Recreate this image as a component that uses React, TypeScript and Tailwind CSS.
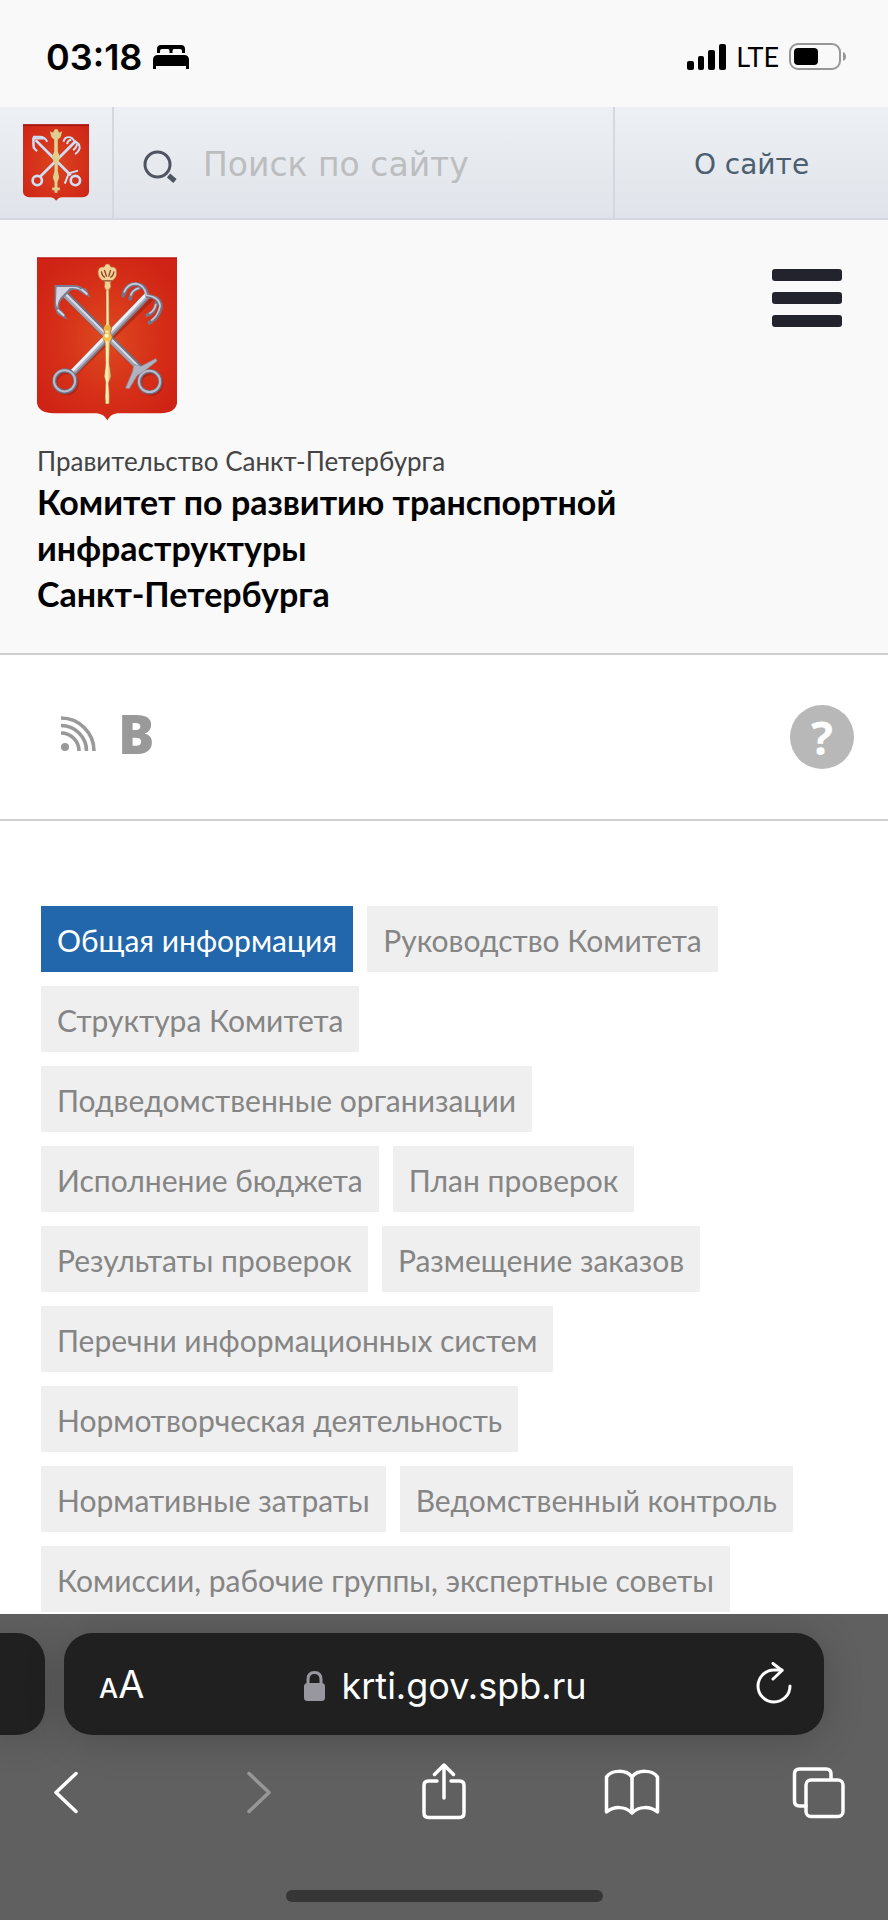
import type { ReactNode } from 'react';

const sections = [
  'Общая информация',
  'Руководство Комитета',
  'Структура Комитета',
  'Подведомственные организации',
  'Исполнение бюджета',
  'План проверок',
  'Результаты проверок',
  'Размещение заказов',
  'Перечни информационных систем',
  'Нормотворческая деятельность',
  'Нормативные затраты',
  'Ведомственный контроль',
  'Комиссии, рабочие группы, экспертные советы',
];

// Small coat of arms used in the portal bar
function SmallEmblem() {
  return (
    <svg viewBox="68 372 199 231" className="w-[66px] h-[77px]" aria-hidden="true">
      <defs>
        <radialGradient id="small-red" cx="50%" cy="50%" r="65%">
          <stop offset="0" stopColor="#dc4420" />
          <stop offset="1" stopColor="#cf2617" />
        </radialGradient>
      </defs>
      <path d="M68 373H267V575Q267 591 247 592H184Q174 593 168 603Q162 593 152 592H88Q68 591 68 575Z" fill="url(#small-red)" />
      <path d="M68 375H267" stroke="#a5130d" strokeWidth="5" />
      <g fill="none" stroke="#cfe0f5" strokeWidth="8">
        <path d="M106 420L212 526" />
        <path d="M228 422L121 529" />
        <circle cx="111" cy="542" r="14" />
        <circle cx="226" cy="542" r="14" />
      </g>
      <g fill="none" stroke="#cfe0f5" strokeWidth="6">
        <path d="M100 446V415H133" />
        <path d="M98 410H116Q134 409 141 425" />
        <path d="M99 412V430Q99 446 111 453" />
        <path d="M190 425Q193 411 206 411Q218 411 223 425Q240 429 239 444Q236 456 225 462" />
        <path d="M201 432Q203 420 214 418" />
        <path d="M231 432Q229 445 219 450" />
        <path d="M194 551L206 520L234 512" />
      </g>
      <path d="M149 393L158 398L164 387H172L177 398L186 393L181 411L173 418V455L180 471L173 491V514L177 532L172 547V563H179V571H172V579H163V571H156V563H163V547L158 532L163 514V491L155 471L162 455V418L154 411Z" fill="#dfcf8e" />
    </svg>
  );
}

// Full size coat of arms with crossed anchors and sceptre
function Emblem() {
  return (
    <svg viewBox="110 112 422 492" className="block w-[140px] h-[164px]" aria-hidden="true">
      <defs>
        <radialGradient id="field" cx="50%" cy="50%" r="60%">
          <stop offset="0" stopColor="#dd4a20" />
          <stop offset="0.6" stopColor="#d62f18" />
          <stop offset="1" stopColor="#cf2315" />
        </radialGradient>
        <linearGradient id="gold" x1="0" x2="1">
          <stop offset="0" stopColor="#e9a94a" />
          <stop offset="0.45" stopColor="#fff0b8" />
          <stop offset="1" stopColor="#c9852f" />
        </linearGradient>
      </defs>
      <path d="M110 112H532V552Q526 582 482 582H352Q332 584 322 603Q312 584 290 582H160Q116 582 110 552Z" fill="url(#field)" />
      <path d="M110 114H532" stroke="#b3160f" strokeWidth="4" />
      <g transform="translate(5 6)" fill="none" stroke="#8f1a10" strokeOpacity="0.5" strokeWidth="15">
        <path d="M180 212L432 462M450 230L215 460" />
        <circle cx="194" cy="485" r="32" strokeWidth="9" />
        <circle cx="450" cy="487" r="32" strokeWidth="9" />
      </g>
      <g fill="none">
        <path d="M186 214L430 456" stroke="#70717f" strokeWidth="21" />
        <path d="M184 216L428 458" stroke="#a2a3b2" strokeWidth="14" />
        <path d="M188 214L430 454" stroke="#dadbe6" strokeWidth="6" />
        <path d="M446 224L214 464" stroke="#80818f" strokeWidth="21" />
        <path d="M444 222L212 462" stroke="#b4b5c4" strokeWidth="15" />
        <path d="M442 220L210 460" stroke="#f1f1f8" strokeWidth="8" />
        <circle cx="194" cy="485" r="32" stroke="#6d6e7e" strokeWidth="13" />
        <circle cx="193" cy="484" r="32" stroke="#bcbdcc" strokeWidth="6" />
        <circle cx="450" cy="487" r="32" stroke="#6d6e7e" strokeWidth="13" />
        <circle cx="449" cy="486" r="32" stroke="#bcbdcc" strokeWidth="6" />
      </g>
      {/* anchor head, left */}
      <path d="M163 195L226 195Q240 196 248 204L258 206L271 234L246 220Q232 206 212 211L199 224L184 240Q174 250 178 268L188 276L202 301L171 283L163 262Z" fill="#7b7c90" />
      <path d="M169 201H224Q238 202 246 212Q228 202 208 205L182 232Q172 244 171 266L167 252Z" fill="#d3d4e2" />
      <path d="M244 208L262 224M172 270L192 288" stroke="#d3d4e2" strokeWidth="6" />
      {/* grapnel, right */}
      <g fill="none" strokeLinecap="round">
        <path d="M370 227Q378 192 408 192Q437 194 443 228Q484 232 483 262Q477 294 449 309" stroke="#75768a" strokeWidth="12" />
        <path d="M391 237Q394 210 418 205M442 286Q466 280 470 248" stroke="#75768a" strokeWidth="11" />
        <path d="M373 216Q384 191 408 191Q433 194 440 226Q480 232 481 258Q476 285 456 301" stroke="#c9cad9" strokeWidth="5" />
        <path d="M393 225Q399 210 416 205M450 280Q464 272 468 254" stroke="#c9cad9" strokeWidth="5" />
      </g>
      <path d="M402 434L424 440L468 417L472 424L432 456L412 468L388 508L377 506L398 456Z" fill="#b0b2c0" stroke="#85879a" strokeWidth="2" />
      {/* sceptre */}
      <path d="M318 208H327L328 312L335 326L331 340L337 353L330 369L328 430L334 470L326 490L329 530L328 554H316L315 530L318 490L312 470L318 430L315 369L308 353L314 340L310 326L318 312Z" fill="url(#gold)" stroke="#a4541d" strokeWidth="2" />
      <path d="M294 154Q296 139 312 141L318 132H327L333 141Q350 139 350 156Q351 174 337 182L331 188L333 200L327 210H317L313 200L315 188L308 182Q293 174 294 154Z" fill="#f0cf98" stroke="#bb6a33" strokeWidth="2" />
      <path d="M304 154Q306 168 315 172M313 150L320 170M332 150L326 170M342 154Q340 168 331 172M308 183H337" fill="none" stroke="#8f4420" strokeWidth="4" />
      <circle cx="322" cy="352" r="13" fill="#f6c24c" />
      <circle cx="320" cy="348" r="6" fill="#fff6cc" />
      <circle cx="322" cy="324" r="9" fill="#efb03c" />
      <path d="M319 385V540" stroke="#fff0c0" strokeWidth="3" />
    </svg>
  );
}

function StatusBar() {
  return (
    <div className="flex items-center justify-between h-[107px] pl-[46px] pr-[42px] pt-[6px] text-black">
      <div className="flex items-center gap-[11px]">
        <span className="font-[Inter,sans-serif] font-semibold text-[36px] leading-[40px]">03:18</span>
        <svg viewBox="0 0 36 24" className="w-9 h-6" aria-hidden="true">
          <path d="M4 8V4Q4 0 8 0H28Q32 0 32 4V8H29V6Q29 4 27 4H21Q19.500 4 19.500 6V8H16.500V6Q16.500 4 15 4H9Q7 4 7 6V8Z" />
          <path d="M0 24V15Q0 10 5 10H31Q36 10 36 15V24H33V21H3V24Z" />
        </svg>
      </div>
      <div className="flex items-center gap-[10px]">
        <svg viewBox="0 0 39 26" className="w-[39px] h-[26px]" aria-hidden="true">
          <rect x="0" y="17" width="7" height="9" rx="2" />
          <rect x="11" y="12" width="6" height="14" rx="2" />
          <rect x="21" y="6" width="7" height="20" rx="2" />
          <rect x="32" y="0" width="7" height="26" rx="2" />
        </svg>
        <span className="font-[Lato,sans-serif] text-[27px] leading-[32px]">LTE</span>
        <svg viewBox="0 0 57 27" className="w-[57px] h-[27px]" aria-hidden="true">
          <rect x="1" y="1" width="50" height="25" rx="8" fill="none" stroke="#979797" strokeWidth="2" />
          <rect x="5" y="5" width="24" height="17" rx="4" />
          <path d="M54 9Q57 10 57 13.500Q57 17 54 18Z" fill="#979797" />
        </svg>
      </div>
    </div>
  );
}

function PortalBar() {
  return (
    <div className="flex h-[113px] border-b-2 border-[#d3d8e0] bg-linear-to-b from-[#edf0f4] to-[#e0e4ea] font-['DejaVu_Sans',Verdana,sans-serif]">
      <a href="#portal" aria-label="Администрация Санкт-Петербурга" className="flex items-center justify-center w-28">
        <SmallEmblem />
      </a>
      <form role="search" className="flex flex-1 min-w-0 items-center gap-[26px] border-x-2 border-[#d3d9e1] pt-1 pl-[29px]">
        <svg viewBox="0 0 34 34" className="w-[34px] h-[34px] mt-1 shrink-0" fill="none" stroke="#4e5560" aria-hidden="true">
          <circle cx="14.500" cy="14.500" r="12.500" strokeWidth="3" />
          <path d="M25.500 25.500L32 31" strokeWidth="5" />
        </svg>
        <input
          type="search"
          aria-label="Поиск по сайту"
          placeholder="Поиск по сайту"
          className="flex-1 min-w-0 h-full bg-transparent text-[33px] outline-none placeholder:text-[#bcbdbf]"
        />
      </form>
      <a href="#about" className="flex items-center justify-center w-[273px] pt-1 text-[28px] text-[#4b5f70]">
        О сайте
      </a>
    </div>
  );
}

function ToolButton({ label, dim, children }: { label: string; dim?: boolean; children: ReactNode }) {
  return (
    <button type="button" aria-label={label} disabled={dim} className={dim ? 'text-[#979797]' : 'text-white'}>
      <svg viewBox="0 0 64 64" className="size-16" fill="none" stroke="currentColor" strokeWidth="3.500" strokeLinecap="round" strokeLinejoin="round" aria-hidden="true">
        {children}
      </svg>
    </button>
  );
}

function BrowserBar() {
  return (
    <footer className="sticky bottom-0 overflow-hidden bg-[#606060] pt-[19px] pb-[18px] font-[Inter,sans-serif]">
      <div className="flex h-[102px] gap-[19px] pr-16">
        <div className="w-[45px] rounded-r-[28px] bg-[#202020] shadow-[0_4px_40px_rgba(0,0,0,0.2)]" />
        <div className="flex flex-1 items-center rounded-[28px] bg-[#202020] pl-[35px] pr-8 text-white shadow-[0_4px_40px_rgba(0,0,0,0.2)]">
          <button type="button" aria-label="Настройки страницы" className="flex w-16 items-baseline pt-1 leading-[44px]">
            <span className="text-[27px] font-medium">А</span>
            <span className="text-[38px]">А</span>
          </button>
          <button type="button" className="flex flex-1 items-center justify-center gap-4 pt-1 text-[36px] leading-[44px]">
            <svg viewBox="0 0 21 30" className="w-[21px] h-[30px]" aria-hidden="true">
              <path d="M4 14V8.500Q4 1.500 10.500 1.500Q17 1.500 17 8.500V14" fill="none" stroke="#98979f" strokeWidth="3" />
              <rect x="0" y="12" width="21" height="18" rx="3.500" fill="#98979f" />
            </svg>
            krti.gov.spb.ru
          </button>
          <button type="button" aria-label="Обновить" className="flex w-16 justify-end">
            <svg viewBox="0 0 36 44" className="w-9 h-11" fill="none" stroke="currentColor" strokeWidth="3" strokeLinecap="round" strokeLinejoin="round" aria-hidden="true">
              <path d="M34 24A16 16 0 1 1 18 8H26" />
              <path d="M17 1.500L26 8.500L17 17" />
            </svg>
          </button>
        </div>
      </div>

      <nav className="mt-[25px] flex justify-between px-[34px]">
        <ToolButton label="Назад">
          <path d="M42 13.500L22 32.500L42 51.500" />
        </ToolButton>
        <ToolButton label="Вперёд" dim>
          <path d="M26 13.500L46 32.500L26 51.500" />
        </ToolButton>
        <ToolButton label="Поделиться">
          <path d="M25 21H16.500Q12 21 12 25.500V53Q12 57.500 16.500 57.500H47.500Q52 57.500 52 53V25.500Q52 21 47.500 21H39" />
          <path d="M32 38V5M22.500 14.500L32 5L41.500 14.500" />
        </ToolButton>
        <ToolButton label="Закладки">
          <path d="M31 17C25 9 10 10 5.500 17V52C13 46 24 46 31 53C38 46 49 46 56.500 52V17C52 10 37 9 31 17V52" />
        </ToolButton>
        <ToolButton label="Вкладки">
          <path d="M16 46H9.500Q4.500 46 4.500 41V14Q4.500 9 9.500 9H36Q41 9 41 14V19" />
          <rect x="16" y="20" width="37" height="36.500" rx="5" />
        </ToolButton>
      </nav>

      <div className="mx-auto mt-[66px] h-3 w-[317px] rounded-full bg-[#363636]" />
    </footer>
  );
}

export default function App() {
  return (
    <div className="flex min-h-screen flex-col bg-white font-[Lato,'Noto_Sans',sans-serif]">
      <div className="bg-[#f9f9f9]">
        <StatusBar />
        <PortalBar />

        {/* Committee name and menu */}
        <header className="flex items-start justify-between border-b-2 border-[#cfcfcf] pt-[37px] pr-[46px] pb-[36px] pl-[37px]">
          <div className="max-w-[640px]">
            <a href="#home" aria-label="На главную" className="block w-[140px]">
              <Emblem />
            </a>
            <p className="mt-[22px] text-[26px] leading-[36px] text-[#444]">Правительство Санкт-Петербурга</p>
            <h1 className="text-[34px] leading-[46px] font-bold text-black">
              Комитет по развитию транспортной инфраструктуры
              <br />
              Санкт-Петербурга
            </h1>
          </div>
          <button type="button" aria-label="Меню" className="mt-3 flex w-[70px] flex-col gap-[11px]">
            <span className="h-3 w-full rounded-[3px] bg-[#22232c]" />
            <span className="h-3 w-full rounded-[3px] bg-[#22232c]" />
            <span className="h-3 w-full rounded-[3px] bg-[#22232c]" />
          </button>
        </header>
      </div>

      {/* Social links */}
      <div className="flex h-[166px] items-center justify-between border-b-2 border-[#cfcfcf] pr-[34px] pl-[61px]">
        <div className="flex items-center gap-[22px] pb-2">
          <a href="#rss" aria-label="RSS">
            <svg viewBox="0 0 35 35" className="size-[35px]" fill="none" stroke="#999" strokeWidth="3.600" aria-hidden="true">
              <path d="M0 2A33 33 0 0 1 33 35M0 9.500A25.500 25.500 0 0 1 25.500 35M0 17A18 18 0 0 1 18 35" />
              <circle cx="4" cy="31" r="4" fill="#999" stroke="none" />
            </svg>
          </a>
          <a href="#vk" aria-label="ВКонтакте" className="font-['Noto_Sans',sans-serif] text-[54px] leading-[48px] font-black text-[#999]">
            B
          </a>
        </div>
        <button type="button" aria-label="Помощь" className="flex size-16 items-center justify-center rounded-full bg-[#b8b8b8] font-['Noto_Sans',sans-serif] text-[46px] leading-none font-bold text-white">
          ?
        </button>
      </div>

      <main className="flex-1 px-[41px] pt-[85px]">
        <nav className="flex flex-wrap gap-[14px]">
          {sections.map((title, i) => (
            <a
              key={title}
              href={`#section-${i}`}
              className={`flex h-[66px] items-center px-4 pt-[2px] text-[30px] ${
                i === 0 ? 'bg-[#2267ab] text-white' : 'bg-[#efefef] text-[#858585]'
              }`}
            >
              {title}
            </a>
          ))}
        </nav>
      </main>

      <BrowserBar />
    </div>
  );
}
